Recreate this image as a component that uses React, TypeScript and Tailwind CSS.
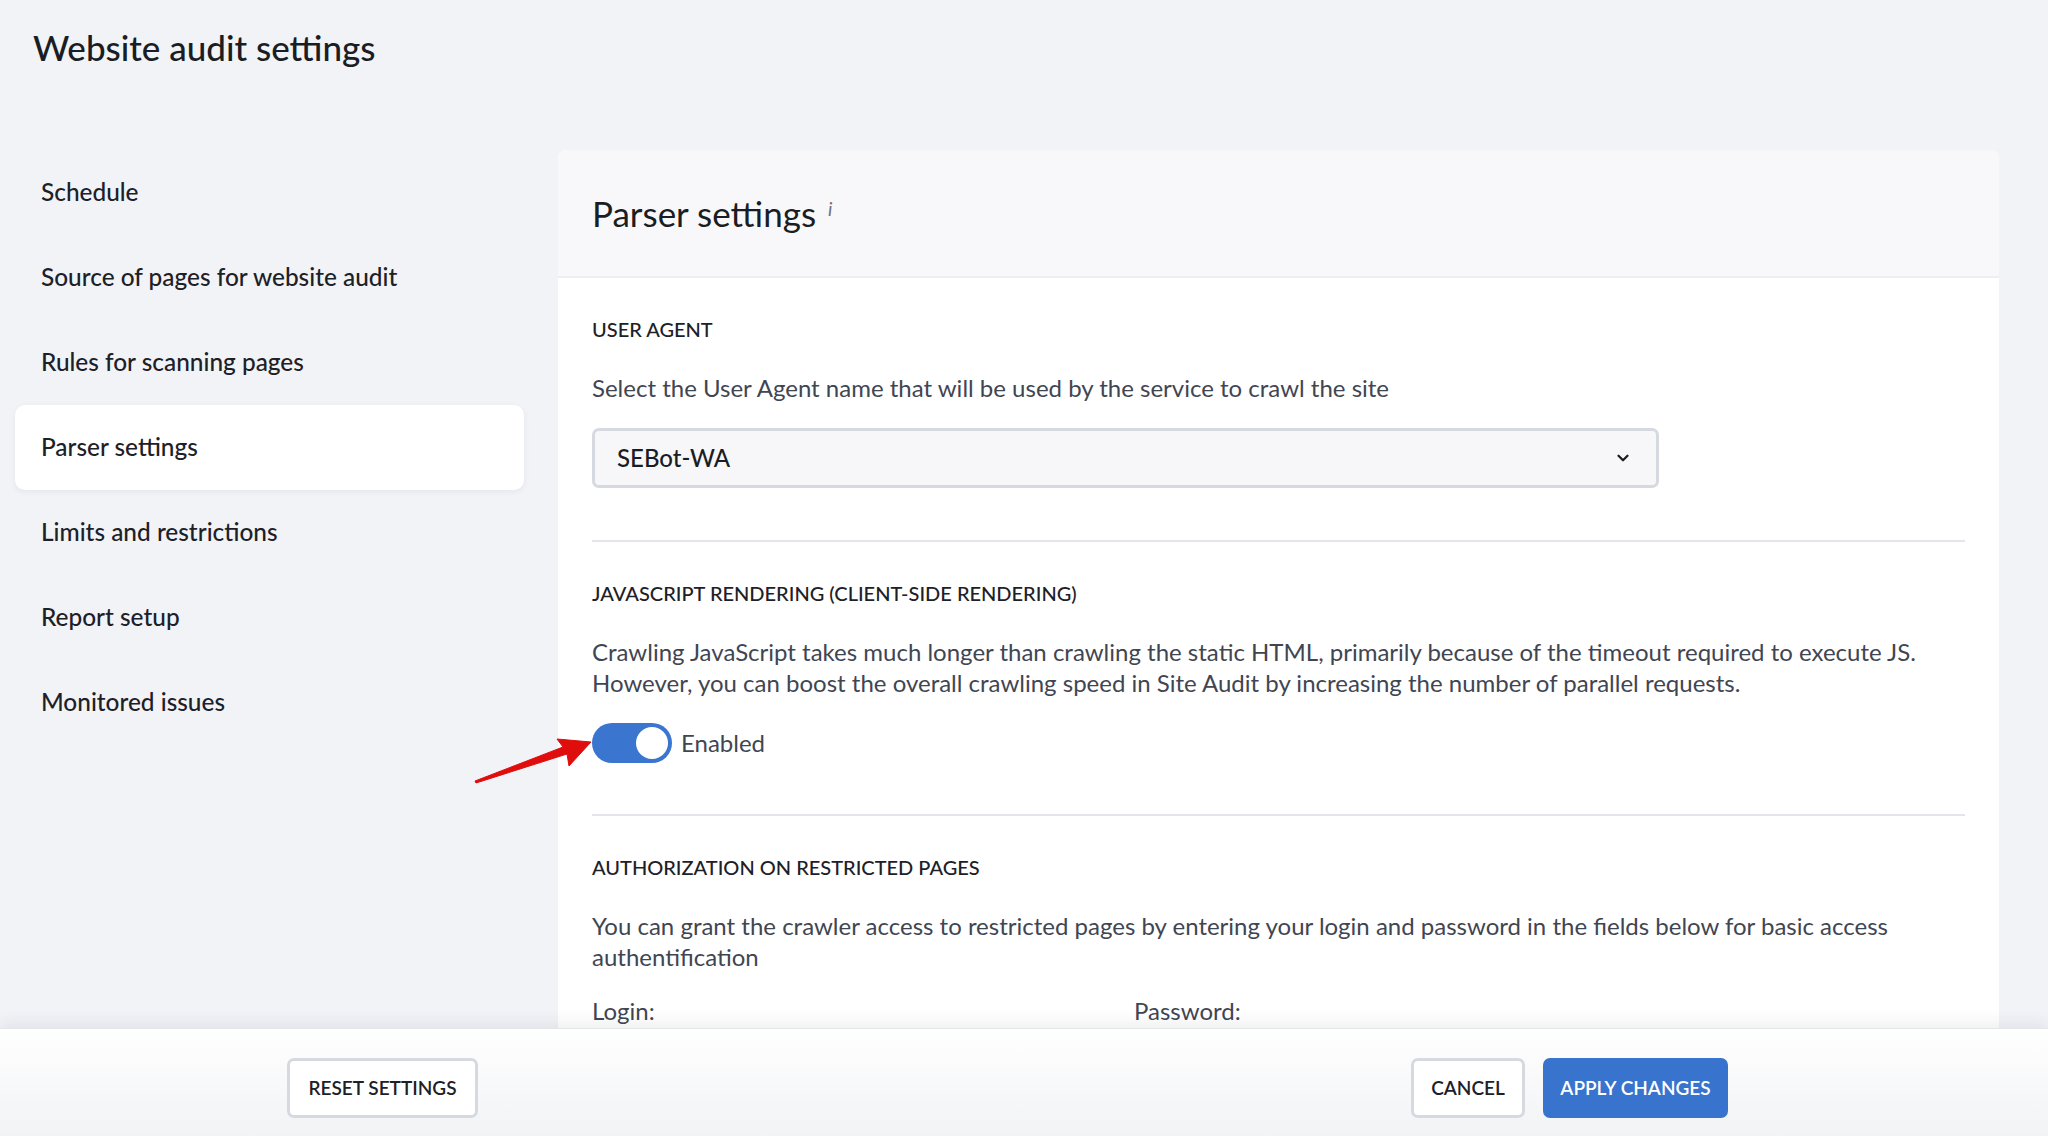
import { ChevronDown } from 'lucide-react';

const navItems = [
  'Schedule',
  'Source of pages for website audit',
  'Rules for scanning pages',
  'Parser settings',
  'Limits and restrictions',
  'Report setup',
  'Monitored issues',
];

function SectionTitle({ children }: { children: React.ReactNode }) {
  return (
    <h3 className="text-[20px] leading-[24px] font-medium uppercase text-[#1d2127] mb-[31px]">
      {children}
    </h3>
  );
}

function Toggle({ on }: { on: boolean }) {
  return (
    <div
      className={`w-[80px] h-[40px] rounded-full p-[4px] flex items-center ${
        on ? 'bg-[#3a75cf] justify-end' : 'bg-[#c9ccd3] justify-start'
      }`}
    >
      <div className="w-[32px] h-[32px] rounded-full bg-white" />
    </div>
  );
}

export default function App() {
  return (
    <div className="h-[1136px] w-full overflow-hidden bg-[#f2f3f7] flex flex-col font-[Lato,sans-serif] text-[#1d2127]">
      <div className="flex-1 min-h-0 flex flex-col overflow-hidden">
        <h1 className="pt-[25px] pl-[33px] text-[35px] leading-[44px] font-medium text-[#1a1d23] mb-[81px]">
          Website audit settings
        </h1>

        <div className="flex-1 min-h-0 flex gap-[34px] pl-[15px] pr-[49px]">
          <nav className="w-[509px] shrink-0 flex flex-col">
            {navItems.map((item) => {
              const active = item === 'Parser settings';
              return (
                <div
                  key={item}
                  className={`h-[85px] flex items-center pl-[26px] text-[24.4px] font-medium text-[#1d2127] rounded-[10px] ${
                    active ? 'bg-white shadow-[0_2px_6px_rgba(30,40,60,0.06)]' : ''
                  }`}
                >
                  {item}
                </div>
              );
            })}
          </nav>

          <main className="flex-1 min-w-0 bg-white rounded-t-[8px]">
            <div className="h-[128px] bg-[#f8f8fa] rounded-t-[8px] border-b-2 border-[#eceef2] flex items-center px-[34px]">
              <h2 className="text-[35px] leading-[40px] text-[#1a1d23]">Parser settings</h2>
              <span className="self-start mt-[48px] ml-[12px] text-[19px] leading-[22px] italic text-[#6b717c]">i</span>
            </div>

            <div className="px-[34px]">
              <section className="pt-[39px] pb-[52px] border-b-2 border-[#e3e5ea]">
                <SectionTitle>User Agent</SectionTitle>
                <p className="text-[24px] leading-[31px] text-[#3f4652] mb-[25px]">
                  Select the User Agent name that will be used by the service to crawl the site
                </p>
                <div className="w-[1067px] h-[60px] rounded-[7px] border-[3px] border-[#d6d9df] bg-[#f7f7f9] flex items-center justify-between pl-[22px] pr-[24px]">
                  <span className="text-[24px] font-medium text-[#1a1d23]">SEBot-WA</span>
                  <ChevronDown size={18} strokeWidth={3} className="text-[#1a1d23]" />
                </div>
              </section>

              <section className="pt-[39px] pb-[51px] border-b-2 border-[#e3e5ea]">
                <SectionTitle>JavaScript rendering (client-side rendering)</SectionTitle>
                <p className="text-[24px] leading-[31px] text-[#3f4652] mb-[25px]">
                  Crawling JavaScript takes much longer than crawling the static HTML, primarily because of the timeout required to execute JS.
                  <br />
                  However, you can boost the overall crawling speed in Site Audit by increasing the number of parallel requests.
                </p>
                <div className="relative flex items-center gap-[9px]">
                  {/* red pointer arrow aimed at the switch */}
                  <svg
                    className="absolute left-[-120px] top-[12px]"
                    width="122"
                    height="50"
                    viewBox="0 0 122 50"
                  >
                    <path
                      d="M3 46 L91 12 L85 4 L119 7 L97 31 L95 19 L4 48 Z"
                      fill="#e00d0d"
                      stroke="#e00d0d"
                      strokeWidth="1"
                      strokeLinejoin="round"
                    />
                  </svg>
                  <Toggle on />
                  <span className="text-[24px] text-[#3f4652]">Enabled</span>
                </div>
              </section>

              <section className="pt-[39px]">
                <SectionTitle>Authorization on restricted pages</SectionTitle>
                <p className="text-[24px] leading-[31px] text-[#3f4652] mb-[23px] pr-[40px]">
                  You can grant the crawler access to restricted pages by entering your login and password in the fields below for basic access authentification
                </p>
                <div className="flex">
                  <span className="w-[542px] text-[24px] leading-[31px] text-[#3f4652]">Login:</span>
                  <span className="text-[24px] leading-[31px] text-[#3f4652]">Password:</span>
                </div>
              </section>
            </div>
          </main>
        </div>
      </div>

      <footer className="h-[108px] shrink-0 bg-gradient-to-b from-white to-[#f2f3f5] border-t border-[#e4e6ea] shadow-[0_-6px_14px_rgba(30,40,60,0.07)] flex items-start justify-between pt-[29px] pl-[287px] pr-[320px]">
        <button className="h-[60px] w-[191px] rounded-[7px] border-[3px] border-[#d6d9e0] bg-white text-[19px] font-semibold uppercase text-[#1d2127]">
          Reset settings
        </button>
        <div className="flex gap-[18px]">
          <button className="h-[60px] w-[114px] rounded-[7px] border-[3px] border-[#d6d9e0] bg-white text-[19px] font-semibold uppercase text-[#1d2127]">
            Cancel
          </button>
          <button className="h-[60px] w-[185px] rounded-[7px] bg-[#3873cd] text-[19px] font-semibold uppercase text-white">
            Apply changes
          </button>
        </div>
      </footer>
    </div>
  );
}
